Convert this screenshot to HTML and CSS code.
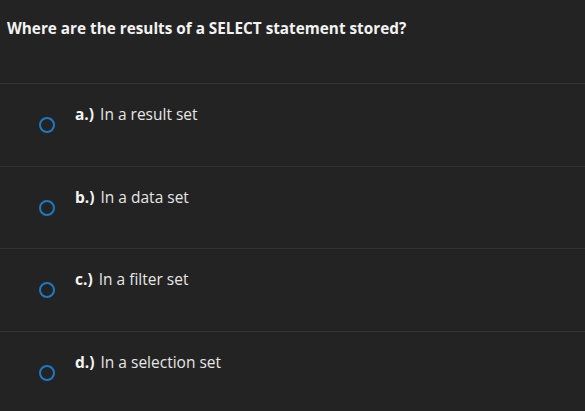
FILE: index.html
```html
<!DOCTYPE html>
<html lang="en">
<head>
    <meta charset="UTF-8">
    <meta name="viewport" content="width=device-width, initial-scale=1.0">
    <title>Quiz Question</title>
    <link rel="stylesheet" href="styles.css">
</head>
<body>
    <div class="quiz">
        <h3 class="prompt">Where are the results of a SELECT statement stored?</h3>
        <div class="option">
            <span class="radio"></span>
            <span class="label"><b>a.)</b> In a result set</span>
        </div>
        <div class="option">
            <span class="radio"></span>
            <span class="label"><b>b.)</b> In a data set</span>
        </div>
        <div class="option">
            <span class="radio"></span>
            <span class="label"><b>c.)</b> In a filter set</span>
        </div>
        <div class="option">
            <span class="radio"></span>
            <span class="label"><b>d.)</b> In a selection set</span>
        </div>
    </div>
</body>
</html>
```

FILE: styles.css
```css
body {
    margin: 0;
    background: #232323;
    color: #ececec;
    font-family: "Open Sans", "Liberation Sans", sans-serif;
}
.quiz {
    width: 585px;
}
.prompt {
    margin: 0;
    height: 83px;
    padding: 18px 0 0 7px;
    box-sizing: border-box;
    font-size: 15.3px;
    font-weight: 700;
    line-height: 20px;
    color: #f2f2f2;
}
.option {
    display: flex;
    align-items: flex-start;
    height: 82.7px;
    box-sizing: border-box;
    border-top: 1px solid #323232;
    padding: 20px 0 0 39px;
}
.radio {
    width: 16px;
    height: 16px;
    box-sizing: border-box;
    border: 2px solid #1d7ac2;
    border-radius: 50%;
    margin-top: 13px;
    margin-right: 20px;
    flex: none;
}
.label {
    font-size: 15.5px;
    line-height: 20px;
    color: #e6e6e6;
}
.label b {
    font-weight: 700;
    color: #f4f4f4;
    margin-right: 2px;
}
```
